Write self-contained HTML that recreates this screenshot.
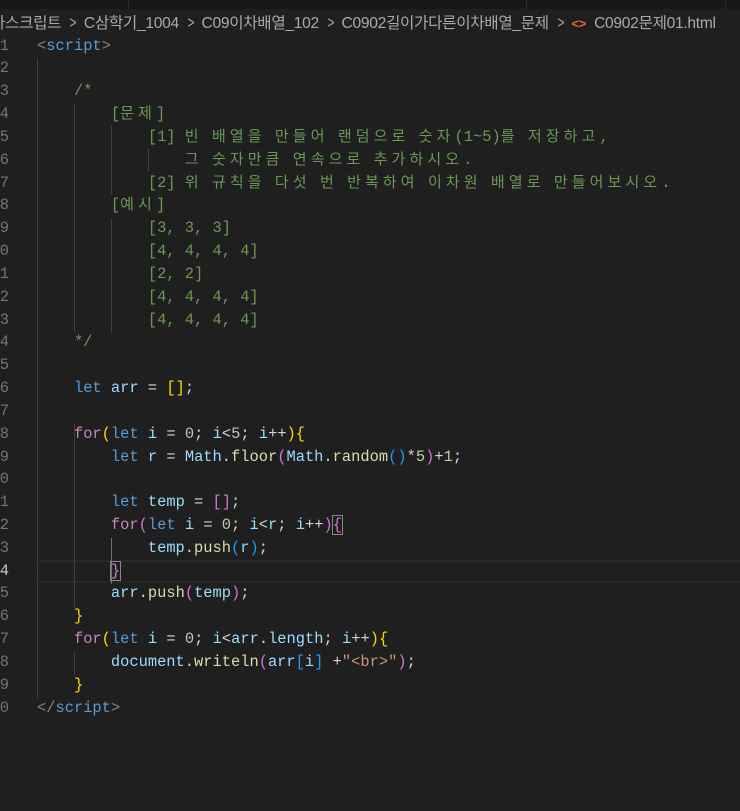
<!DOCTYPE html>
<html><head><meta charset="utf-8"><style>
html,body{margin:0;padding:0;background:#1f1f1f;width:740px;height:811px;overflow:hidden;position:relative}
.tabs{position:absolute;left:0;top:0;width:740px;height:9px;background:#181818}
.tabs i{position:absolute;top:0;height:9px;width:1px;background:#2b2b2b}
.bc{position:absolute;top:11px;left:-9px;height:24px;line-height:24px;font-family:"Liberation Sans","Noto Sans CJK KR",sans-serif;font-size:15.6px;color:#a9a9a9;white-space:nowrap;letter-spacing:-0.3px}
.bc .s{margin:0 6px 0 7px;color:#a9a9a9;display:inline-block;transform:scaleX(0.7);font-size:17px}
.bc .ic{color:#e2692d;font-weight:bold;margin-right:8px;font-size:13px}
.code{position:absolute;left:0;top:34.6px;font-family:"Liberation Mono","Noto Sans CJK KR",monospace;font-size:15.4px;line-height:22.83px;color:#d4d4d4}
.ln{position:absolute;left:-30px;top:34.6px;width:39px;text-align:right;font-family:"Liberation Mono",monospace;font-size:15.4px;line-height:22.83px;color:#6e7681;white-space:pre}
.line{height:22.83px;padding-left:37px;white-space:pre}
.k{letter-spacing:4.1px;font-size:15px}
.c{color:#6a9955}.kw{color:#569cd6}.fo{color:#c586c0}.v{color:#9cdcfe}.f{color:#dcdcaa}.n{color:#b5cea8}.t{color:#808080}.y{color:#ffd700}.p{color:#da70d6}.b{color:#179fff}.st{color:#ce9178}
.g{position:absolute;width:1px;background:#404040}
.cur{position:absolute;left:37px;right:0;top:559.5px;height:19px;border-top:2px solid #282828;border-bottom:2px solid #282828}
.box{outline:1px solid #888;}
</style></head><body>
<div class="tabs"><i style="left:128px"></i><i style="left:526px"></i><i style="left:725px"></i></div>
<div class="bc">바스크립트<span class="s">&gt;</span>C삼학기_1004<span class="s">&gt;</span>C09이차배열_102<span class="s">&gt;</span>C0902길이가다른이차배열_문제<span class="s">&gt;</span><span class="ic">&lt;&gt;</span>C0902문제01.html</div>
<div class="cur"></div>
<div class="g" style="left:37px;top:58px;height:640px"></div>
<div class="g" style="left:74px;top:104px;height:228px"></div>
<div class="g" style="left:74px;top:424px;height:183px"></div>
<div class="g" style="left:74px;top:652px;height:23px"></div>
<div class="g" style="left:111px;top:126px;height:68px"></div>
<div class="g" style="left:111px;top:218px;height:114px"></div>
<div class="g" style="left:111px;top:538px;height:46px;background:#707070"></div>
<div class="g" style="left:148px;top:149px;height:22px"></div>
<div class="ln">1
2
3
4
5
6
7
8
9
10
11
12
13
14
15
16
17
18
19
20
21
22
23
<span style="color:#ccc">24</span>
25
26
27
28
29
30</div>
<div class="code"><div class="line"><span class="t">&lt;</span><span class="kw">script</span><span class="t">&gt;</span></div><div class="line"></div><div class="line c">    /*</div><div class="line c">        [<span class="k">문제</span>]</div><div class="line c">            [1] <span class="k">빈</span> <span class="k">배열을</span> <span class="k">만들어</span> <span class="k">랜덤으로</span> <span class="k">숫자</span>(1~5)<span class="k">를</span> <span class="k">저장하고</span>,</div><div class="line c">                <span class="k">그</span> <span class="k">숫자만큼</span> <span class="k">연속으로</span> <span class="k">추가하시오</span>.</div><div class="line c">            [2] <span class="k">위</span> <span class="k">규칙을</span> <span class="k">다섯</span> <span class="k">번</span> <span class="k">반복하여</span> <span class="k">이차원</span> <span class="k">배열로</span> <span class="k">만들어보시오</span>.</div><div class="line c">        [<span class="k">예시</span>]</div><div class="line c">            [3, 3, 3]</div><div class="line c">            [4, 4, 4, 4]</div><div class="line c">            [2, 2]</div><div class="line c">            [4, 4, 4, 4]</div><div class="line c">            [4, 4, 4, 4]</div><div class="line c">    */</div><div class="line"></div><div class="line">    <span class="kw">let</span> <span class="v">arr</span> = <span class="y">[]</span>;</div><div class="line"></div><div class="line">    <span class="fo">for</span><span class="y">(</span><span class="kw">let</span> <span class="v">i</span> = <span class="n">0</span>; <span class="v">i</span>&lt;<span class="n">5</span>; <span class="v">i</span>++<span class="y">){</span></div><div class="line">        <span class="kw">let</span> <span class="v">r</span> = <span class="v">Math</span>.<span class="f">floor</span><span class="p">(</span><span class="v">Math</span>.<span class="f">random</span><span class="b">()</span>*<span class="n">5</span><span class="p">)</span>+<span class="n">1</span>;</div><div class="line"></div><div class="line">        <span class="kw">let</span> <span class="v">temp</span> = <span class="p">[]</span>;</div><div class="line">        <span class="fo">for</span><span class="p">(</span><span class="kw">let</span> <span class="v">i</span> = <span class="n">0</span>; <span class="v">i</span>&lt;<span class="v">r</span>; <span class="v">i</span>++<span class="p">)</span><span class="p box">{</span></div><div class="line">            <span class="v">temp</span>.<span class="f">push</span><span class="b">(</span><span class="v">r</span><span class="b">)</span>;</div><div class="line">        <span class="p box">}</span></div><div class="line">        <span class="v">arr</span>.<span class="f">push</span><span class="p">(</span><span class="v">temp</span><span class="p">)</span>;</div><div class="line">    <span class="y">}</span></div><div class="line">    <span class="fo">for</span><span class="y">(</span><span class="kw">let</span> <span class="v">i</span> = <span class="n">0</span>; <span class="v">i</span>&lt;<span class="v">arr</span>.<span class="v">length</span>; <span class="v">i</span>++<span class="y">){</span></div><div class="line">        <span class="v">document</span>.<span class="f">writeln</span><span class="p">(</span><span class="v">arr</span><span class="b">[</span><span class="v">i</span><span class="b">]</span> +<span class="st">"&lt;br&gt;"</span><span class="p">)</span>;</div><div class="line">    <span class="y">}</span></div><div class="line"><span class="t">&lt;/</span><span class="kw">script</span><span class="t">&gt;</span></div></div>
</body></html>
